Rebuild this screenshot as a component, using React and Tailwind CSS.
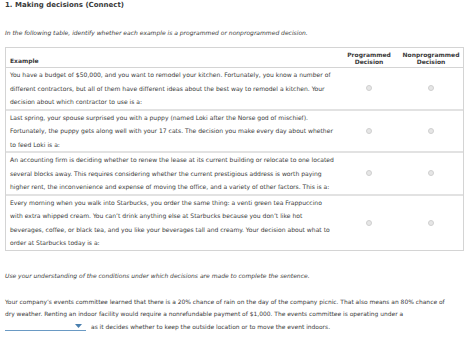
const rows = [
  [
    "You have a budget of $50,000, and you want to remodel your kitchen. Fortunately, you know a number of",
    "different contractors, but all of them have different ideas about the best way to remodel a kitchen. Your",
    "decision about which contractor to use is a:",
  ],
  [
    "Last spring, your spouse surprised you with a puppy (named Loki after the Norse god of mischief).",
    "Fortunately, the puppy gets along well with your 17 cats. The decision you make every day about whether",
    "to feed Loki is a:",
  ],
  [
    "An accounting firm is deciding whether to renew the lease at its current building or relocate to one located",
    "several blocks away. This requires considering whether the current prestigious address is worth paying",
    "higher rent, the inconvenience and expense of moving the office, and a variety of other factors. This is a:",
  ],
  [
    "Every morning when you walk into Starbucks, you order the same thing: a venti green tea Frappuccino",
    "with extra whipped cream. You can\u2019t drink anything else at Starbucks because you don\u2019t like hot",
    "beverages, coffee, or black tea, and you like your beverages tall and creamy. Your decision about what to",
    "order at Starbucks today is a:",
  ],
];

const Radio = () => (
  <span className="inline-block w-[6px] h-[6px] rounded-full bg-[#e6e6e6] border border-[#cfcfcf]" />
);

export default function App() {
  return (
    <div className="w-[474px] h-[338px] bg-white text-[#3a3a3a] font-['DejaVu_Sans',Verdana,sans-serif] text-[6px] overflow-hidden">
      <div className="pl-[5px] pt-[1px] font-bold text-[7px] leading-[9px]">1. Making decisions (Connect)</div>

      <div className="mt-[19px] pl-[5px] italic leading-[7px]">
        In the following table, identify whether each example is a programmed or nonprogrammed decision.
      </div>

      <div className="mt-[11px] ml-[5px] w-[459px] border border-[#d4d4d4]">
        <div className="flex h-[20px] border-b border-[#d4d4d4] font-bold leading-[7px] text-[6px]">
          <div className="w-[333px] pl-[4px] flex items-end pb-[3px]">Example</div>
          <div className="w-[60px] flex items-center justify-center text-center">
            Programmed<br />Decision
          </div>
          <div className="flex-1 flex items-center justify-center text-center">
            Nonprogrammed<br />Decision
          </div>
        </div>
        {rows.map((lines, i) => (
          <div
            key={i}
            className={`flex items-center ${i < rows.length - 1 ? "border-b-2 border-[#e2e2e2]" : ""}`}
          >
            <div className="w-[333px] pl-[4px] leading-[13.5px] text-[6.05px]">
              {lines.map((l, j) => (
                <div key={j} className="whitespace-nowrap">{l}</div>
              ))}
            </div>
            <div className="w-[60px] flex justify-center">
              <Radio />
            </div>
            <div className="flex-1 flex justify-center">
              <Radio />
            </div>
          </div>
        ))}
      </div>

      <div className="mt-[21px] pl-[5px] italic leading-[7px]">
        Use your understanding of the conditions under which decisions are made to complete the sentence.
      </div>

      <div className="mt-[17px] pl-[5px] leading-[12.5px] text-[5.95px]">
        <div className="whitespace-nowrap">
          Your company{"\u2019"}s events committee learned that there is a 20% chance of rain on the day of the company picnic. That also means an 80% chance of
        </div>
        <div className="whitespace-nowrap">
          dry weather. Renting an indoor facility would require a nonrefundable payment of $1,000. The events committee is operating under a
        </div>
        <div className="flex items-center">
          <div className="w-[81px] h-[8px] border-b-[1.5px] border-[#6a9ac4] flex justify-end items-center pr-[4px]">
            <svg width="7" height="4" viewBox="0 0 7 4">
              <path d="M0 0 L7 0 L3.5 4 Z" fill="#4a7fae" />
            </svg>
          </div>
          <span className="ml-[5px]">as it decides whether to keep the outside location or to move the event indoors.</span>
        </div>
      </div>
    </div>
  );
}
